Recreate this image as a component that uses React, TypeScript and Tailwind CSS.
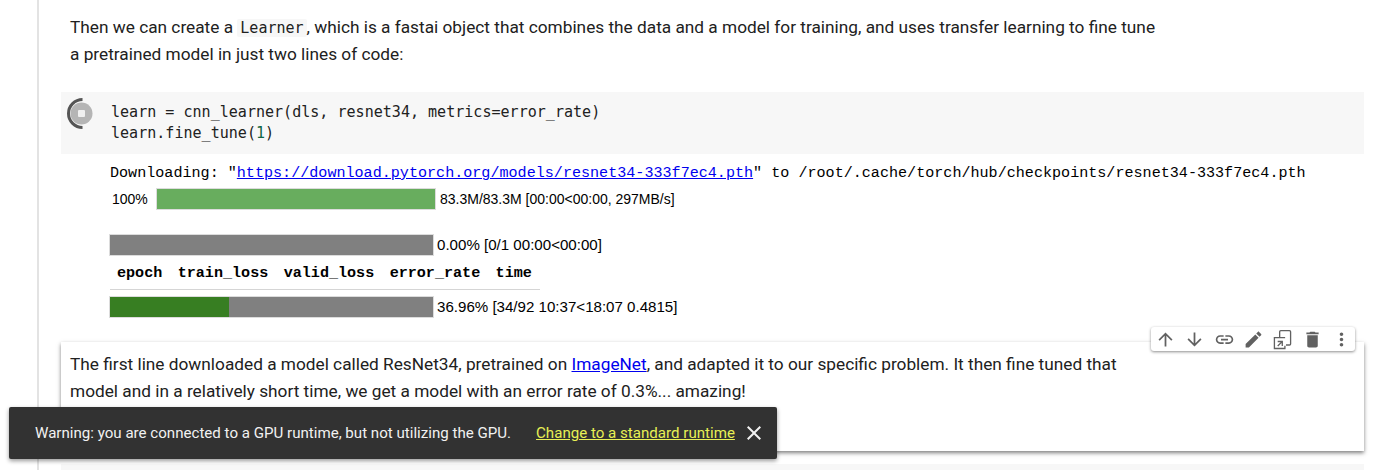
import type { ReactNode } from 'react';

const Icon = ({ children, size = 21 }: { children: ReactNode; size?: number }) => (
  <svg width={size} height={size} viewBox="0 0 24 24" fill="#616161">
    {children}
  </svg>
);

const CellToolbar = () => (
  <div className="absolute right-[9px] top-[-15px] flex h-[24px] w-[204px] items-center justify-between rounded-[3px] bg-white pl-[4px] pr-[3px] shadow-[0_1px_3px_rgba(0,0,0,0.45)]">
    <Icon><path d="M4 12l1.41 1.41L11 7.83V20h2V7.83l5.58 5.59L20 12l-8-8-8 8z" /></Icon>
    <Icon><path d="M20 12l-1.41-1.41L13 16.17V4h-2v12.17l-5.58-5.59L4 12l8 8 8-8z" /></Icon>
    <Icon><path d="M3.9 12c0-1.71 1.39-3.1 3.1-3.1h4V7H7c-2.76 0-5 2.24-5 5s2.24 5 5 5h4v-1.9H7c-1.71 0-3.1-1.39-3.1-3.1zM8 13h8v-2H8v2zm9-6h-4v1.9h4c1.71 0 3.1 1.39 3.1 3.1s-1.39 3.1-3.1 3.1h-4V17h4c2.76 0 5-2.24 5-5s-2.24-5-5-5z" /></Icon>
    <Icon><path d="M3 17.25V21h3.75L17.81 9.94l-3.75-3.75L3 17.25zM20.71 7.04c.39-.39.39-1.02 0-1.41l-2.34-2.34c-.39-.39-1.02-.39-1.41 0l-1.83 1.83 3.75 3.75 1.83-1.83z" /></Icon>
    <Icon><path d="M10 1h10a2 2 0 0 1 2 2v14a2 2 0 0 1-2 2h-4v-1.5h4a.5.5 0 0 0 .5-.5V3a.5.5 0 0 0-.5-.5H10a.5.5 0 0 0-.5.5v6H8V3a2 2 0 0 1 2-2zM2 9h13v1.5H3.500V21.500H14V19h1.500v4H2V9zm4.500 4.500h6v6H11v-3.400L7.100 20l-1.100-1.100L9.900 15H6.500v-1.500z" /></Icon>
    <Icon><path d="M6 19c0 1.1.9 2 2 2h8c1.1 0 2-.9 2-2V7H6v12zM19 4h-3.500l-1-1h-5l-1 1H5v2h14V4z" /></Icon>
    <Icon><path d="M12 8c1.1 0 2-.9 2-2s-.9-2-2-2-2 .9-2 2 .9 2 2 2zm0 2c-1.1 0-2 .9-2 2s.9 2 2 2 2-.9 2-2-.9-2-2-2zm0 6c-1.1 0-2 .9-2 2s.9 2 2 2 2-.9 2-2-.9-2-2-2z" /></Icon>
  </div>
);

const RunButton = () => (
  <svg width="30" height="32" viewBox="0 0 30 32" className="mt-[6px] ml-[6px] shrink-0">
    <circle cx="14.500" cy="15.500" r="11" fill="#b5b5b5" />
    <rect x="11" y="12" width="7" height="7" rx="1" fill="#f0f0f0" />
    <path d="M15.500 1.500A14 14 0 0 0 15.500 29.500" fill="none" stroke="#555" strokeWidth="3" />
  </svg>
);

const Bar = ({ width, value = 0, color = '#808080', className = '' }: { width: number; value?: number; color?: string; className?: string }) => (
  <div className={`h-[22px] shrink-0 border border-[#dcdcdc] bg-[#808080] ${className}`} style={{ width }}>
    <div className="h-full" style={{ width: `${value}%`, backgroundColor: color }} />
  </div>
);

export default function App() {
  return (
    <div className="relative flex h-[470px] w-[1380px] overflow-hidden bg-white font-['Roboto',sans-serif] text-[#212121]">
      <div className="w-[39px] shrink-0 border-r-2 border-[#e3e3e3]" />
      <main className="ml-[22px] w-[1303px] shrink-0">
        <p className="w-[1100px] pl-[9px] pt-[14px] text-[17.25px] leading-[27px]">
          Then we can create a{' '}
          <code className="rounded-[2px] bg-[#f7f7f7] px-[3px] font-['DejaVu_Sans_Mono',monospace] text-[15px] leading-none">Learner</code>
          , which is a fastai object that combines the data and a model for training, and uses transfer learning to fine tune a pretrained model in just two lines of code:
        </p>

        <div className="mt-[24px] flex h-[62px] bg-[#f7f7f7]">
          <RunButton />
          <pre className="pl-[14px] pt-[10px] font-['DejaVu_Sans_Mono',monospace] text-[15.05px] leading-[21px] text-[#212121]">
            learn = cnn_learner(dls, resnet34, metrics=error_rate){'\n'}learn.fine_tune(<span className="text-[#116644]">1</span>)
          </pre>
        </div>

        <div className="pl-[49px] text-black">
          <div className="mt-[10px] whitespace-nowrap font-['Liberation_Mono',monospace] text-[15.1px] leading-[19px]">
            Downloading: "<a className="text-[#0000ee] underline">https://download.pytorch.org/models/resnet34-333f7ec4.pth</a>" to /root/.cache/torch/hub/checkpoints/resnet34-333f7ec4.pth
          </div>
          <div className="mt-[5px] flex h-[22px] items-center font-['Liberation_Sans',sans-serif] text-[14px]">
            <span className="w-[46px] pl-[2px]">100%</span>
            <Bar width={280} value={100} color="#68ad5e" />
            <span className="pl-[4px]">83.3M/83.3M [00:00&lt;00:00, 297MB/s]</span>
          </div>
          <div className="mt-[24px] flex h-[22px] items-center font-['Liberation_Sans',sans-serif] text-[15.1px]">
            <Bar width={325} className="-ml-px" />
            <span className="pl-[3px]">0.00% [0/1 00:00&lt;00:00]</span>
          </div>
          <div className="mt-[7px] flex h-[27px] w-[430px] items-center gap-[15.4px] border-b border-[#d5d5d5] pb-[5px] pl-[7px] font-['Liberation_Mono',monospace] text-[15.1px] font-bold">
            <span>epoch</span>
            <span>train_loss</span>
            <span>valid_loss</span>
            <span>error_rate</span>
            <span>time</span>
          </div>
          <div className="mt-[6px] flex h-[22px] items-center font-['Liberation_Sans',sans-serif] text-[15.1px]">
            <Bar width={325} value={36.96} color="#377e22" className="-ml-px" />
            <span className="pl-[3px]">36.96% [34/92 10:37&lt;18:07 0.4815]</span>
          </div>
        </div>

        <div className="relative mt-[24px] h-[109px] bg-white pl-[9px] pt-[9px] shadow-[0_2px_4px_rgba(0,0,0,0.5)]">
          <CellToolbar />
          <p className="w-[1060px] text-[17.25px] leading-[27px]">
            The first line downloaded a model called ResNet34, pretrained on{' '}
            <a className="text-[#0000ee] underline">ImageNet</a>, and adapted it to our specific problem. It then fine tuned that model and in a relatively short time, we get a model with an error rate of 0.3%... amazing!
          </p>
        </div>

        <div className="mt-[13px] h-[20px] bg-[#f7f7f7]" />
      </main>

      <div className="absolute left-[9px] top-[407px] flex h-[52px] w-[768px] items-center rounded-[2px] bg-[#323232] pl-[26px] text-[15.1px] text-[#f1f1f1] shadow-[0_2px_4px_rgba(0,0,0,0.4)]">
        <span>Warning: you are connected to a GPU runtime, but not utilizing the GPU.</span>
        <a className="ml-[25px] text-[#e8f055] underline">Change to a standard runtime</a>
        <svg width="24" height="24" viewBox="0 0 24 24" fill="#f1f1f1" className="ml-[7px]">
          <path d="M19 6.41L17.59 5 12 10.59 6.41 5 5 6.41 10.59 12 5 17.59 6.41 19 12 13.41 17.59 19 19 17.59 13.41 12z" />
        </svg>
      </div>
    </div>
  );
}
